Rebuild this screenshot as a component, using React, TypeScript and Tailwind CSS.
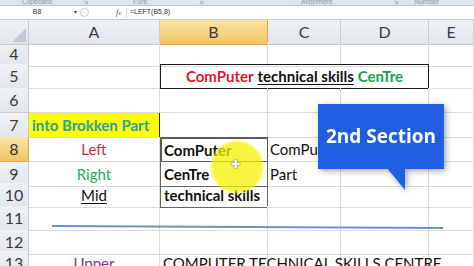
import React from 'react';

const COLS = 'grid grid-cols-[29px_131px_108px_73px_88px_1fr]';

type Row = { n: number; h: string };

const rows: Row[] = [
    { n: 4, h: 'h-[22px]' },
    { n: 5, h: 'h-[24px]' },
    { n: 6, h: 'h-[25px]' },
    { n: 7, h: 'h-[24px]' },
    { n: 8, h: 'h-[25px]' },
    { n: 9, h: 'h-[21px]' },
    { n: 10, h: 'h-[23px]' },
    { n: 11, h: 'h-[24px]' },
    { n: 12, h: 'h-[21px]' },
    { n: 13, h: 'h-[24px]' },
];

const cell = 'border-r border-b border-[#dadcdd] flex items-center overflow-hidden whitespace-nowrap';

function RowLabel({ n }: { n: number }) {
    const active = n === 8;
    return (
        <div
            className={`flex items-center justify-center border-r border-b text-[16px] ${
                active
                    ? 'bg-gradient-to-b from-[#fbe3a2] to-[#f3c461] border-[#d9a94b] text-[#333]'
                    : 'bg-gradient-to-b from-[#eef1f5] to-[#e2e6eb] border-[#c5cdd6] text-[#3a3a3a]'
            }`}
        >
            {n}
        </div>
    );
}

function SheetRow({ n, h }: Row) {
    let a: React.ReactNode = null;
    let b: React.ReactNode = null;
    let c: React.ReactNode = null;
    let aCls = '';
    let bCls = '';

    if (n === 5) {
        return (
            <div className={`${COLS} ${h}`}>
                <RowLabel n={n} />
                <div className={cell} />
                <div className="col-span-3 flex items-center justify-center border-[1.5px] border-[#1a1a1a] font-bold text-[15px] whitespace-nowrap">
                    <span className="text-[#e3162b]">ComPuter</span>
                    <span className="ml-[4px] text-[#111] underline underline-offset-2">technical skills</span>
                    <span className="ml-[4px] text-[#16a552]">CenTre</span>
                </div>
                <div className={cell} />
            </div>
        );
    }

    if (n === 7) {
        aCls = 'bg-[#ffff00] !border-r-[#222] !border-r-[1.5px] pl-[3px] font-bold text-[#27a39a]';
        a = 'into Brokken Part';
    }
    if (n === 8) {
        aCls = 'justify-center text-[#e3283a]';
        a = 'Left';
        bCls = 'border-2 !border-[#5a5a5a] pl-[2px] font-bold text-[#111]';
        b = 'ComPuter';
        c = 'ComPu';
    }
    if (n === 9) {
        aCls = 'justify-center text-[#22ad5c]';
        a = 'Right';
        bCls = 'border-x border-b !border-[#666] pl-[3px] font-bold text-[#111]';
        b = 'CenTre';
        c = 'Part';
    }
    if (n === 10) {
        aCls = 'justify-center text-[#111]';
        a = <span className="underline underline-offset-2">Mid</span>;
        bCls = 'border-x border-b !border-[#666] pl-[3px] font-bold text-[#111]';
        b = 'technical skills';
    }
    if (n === 13) {
        aCls = 'justify-center text-[#7a35a6]';
        a = 'Upper';
        b = 'COMPUTER TECHNICAL SKILLS CENTRE';
        bCls = 'pl-[3px] text-[#111] !overflow-visible relative z-10';
    }

    return (
        <div className={`${COLS} ${h}`}>
            <RowLabel n={n} />
            <div className={`${cell} ${aCls}`}>{a}</div>
            <div className={`${cell} ${bCls}`}>{b}</div>
            <div className={`${cell} pl-[2px] text-[#111]`}>{c}</div>
            <div className={cell} />
            <div className={cell} />
        </div>
    );
}

export default function App() {
    return (
        <div className="relative w-[474px] h-[266px] overflow-hidden bg-white font-['Lato',sans-serif] text-[15px]">
            {/* Ribbon group labels */}
            <div className="h-[6px] bg-[#dde5ee] border-b border-[#b9c6d5] flex items-end text-[7px] leading-[6px] text-[#8a96a4] font-['Liberation_Sans',sans-serif] overflow-hidden">
                <span className="ml-[22px]">Clipboard</span>
                <span className="ml-[32px] text-[5px]">⇲</span>
                <span className="ml-[45px]">Font</span>
                <span className="ml-[52px] text-[5px]">⇲</span>
                <span className="ml-[98px]">Alignment</span>
                <span className="ml-[62px] text-[5px]">⇲</span>
                <span className="ml-[16px]">Number</span>
                <span className="ml-[36px] text-[5px]">⇲</span>
            </div>

            {/* Formula bar */}
            <div className="h-[14px] flex items-center bg-white border-b border-[#c6ced8] font-['Liberation_Sans',sans-serif] text-[7px] text-[#333]">
                <div className="w-[74px] text-center">B8</div>
                <span className="text-[6px] text-[#444]">▾</span>
                <div className="ml-[3px] w-[9px] h-[9px] rounded-full border border-[#ccc] text-[5px] leading-[7px] text-center text-[#bbb]">~</div>
                <div className="ml-[27px] italic font-['Liberation_Serif',serif] text-[8px] text-[#555]">f<span className="text-[6px]">x</span></div>
                <div className="ml-[5px] w-px h-[10px] bg-[#d6dbe1]" />
                <div className="ml-[3px]">=LEFT(B5,8)</div>
            </div>

            {/* Column headers */}
            <div className={`${COLS} h-[22px] text-[16px] text-[#3a3a3a]`}>
                <div className="relative bg-gradient-to-b from-[#eef1f5] to-[#e2e6eb] border-r border-b border-[#c5cdd6]">
                    <div className="absolute right-[2px] bottom-[2px] w-0 h-0 border-l-[14px] border-l-transparent border-b-[14px] border-b-[#c5cad1]" />
                </div>
                {['A', 'B', 'C', 'D', 'E'].map((l) => (
                    <div
                        key={l}
                        className={`flex items-center justify-center border-r border-b ${
                            l === 'B'
                                ? 'bg-gradient-to-b from-[#fbe3a2] to-[#f3c461] border-[#d9a94b]'
                                : 'bg-gradient-to-b from-[#eef1f5] to-[#e2e6eb] border-[#c5cdd6]'
                        }`}
                    >
                        {l}
                    </div>
                ))}
            </div>

            {rows.map((r) => (
                <SheetRow key={r.n} {...r} />
            ))}

            {/* Hand-drawn line */}
            <svg className="absolute left-0 top-0 pointer-events-none" width="474" height="266">
                <line x1="52" y1="226" x2="443" y2="228" stroke="#6f8fc6" strokeWidth="2" />
            </svg>

            {/* Cursor highlight */}
            <div className="absolute left-[211px] top-[141px] w-[52px] h-[52px] rounded-full bg-[#f6f200]/75 blur-[1px] pointer-events-none" />
            <div className="absolute left-[231px] top-[158px] text-[11px] leading-none font-bold text-white [text-shadow:0_0_1px_#000]">✚</div>

            {/* Callout */}
            <div className="absolute left-[318px] top-[104px] drop-shadow-[2px_2px_3px_rgba(0,0,0,0.35)]">
                <div className="w-[126px] h-[65px] bg-[#1f5fe0] flex items-center justify-center text-white font-bold text-[19px] font-['Open_Sans',sans-serif]">
                    2nd Section
                </div>
                <svg className="absolute left-[69px] top-[64px]" width="20" height="23">
                    <polygon points="0,0 18,0 18,22" fill="#1f5fe0" />
                </svg>
            </div>
        </div>
    );
}
